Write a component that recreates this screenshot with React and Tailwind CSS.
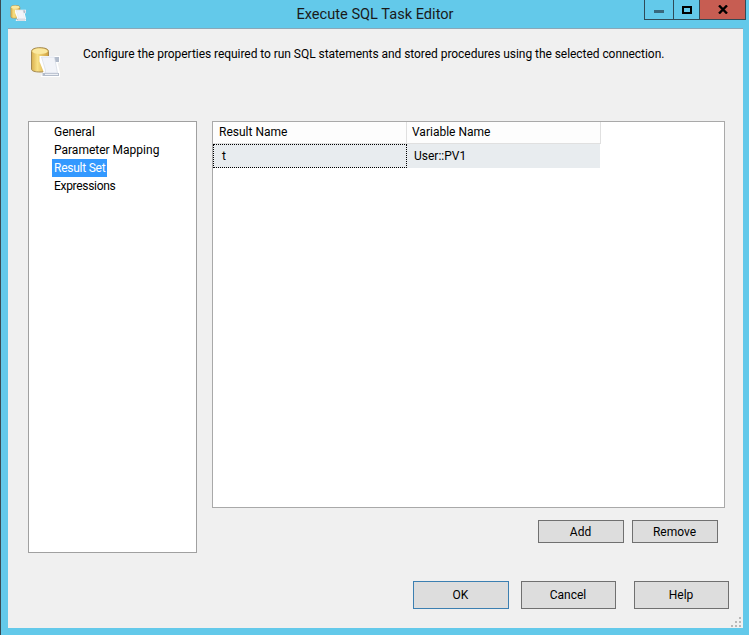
import React from 'react';

function TaskIcon({ size = 30, id = 'can' }) {
  return (
    <svg width={size} height={size} viewBox="0 0 30 30">
      <defs>
        <linearGradient id={id} x1="0" x2="1" y1="0" y2="0">
          <stop offset="0" stopColor="#d9b04f" />
          <stop offset="0.35" stopColor="#f8e084" />
          <stop offset="1" stopColor="#cf9f3e" />
        </linearGradient>
      </defs>
      <path d="M1.500 4.500C1.500 2 5 .7 10 .7S18.500 2 18.500 4.500V22c0 2-3.500 3-8.500 3s-8.500-1-8.500-3z" fill={`url(#${id})`} stroke="#a58a50" />
      <ellipse cx="10" cy="4.300" rx="7.800" ry="2.800" fill="#fbe9a0" />
      <path d="M9.500 9H30V15.500H27.500L30 25.500V30H10.500L13.500 24.500L9.500 14.500z" fill="#ffffff" />
      <path d="M23.500 10H29V15H25z" fill="#b3bccb" />
      <path d="M11.500 10H24.500L27.500 26H15L15.500 23.500L13 15z" fill="#f2f4f9" stroke="#cfd5e0" strokeWidth=".6" />
      <path d="M12.500 26H29V29H12.500z" fill="#b3bccb" />
      <path d="M15 26.800H28V28H15z" fill="#edf0f5" />
    </svg>
  );
}

function DialogButton({ label, className }) {
  return (
    <button className={`bg-[#dddddd] border text-[#000000] flex items-center justify-center pr-[1px] ${className}`}>
      {label}
    </button>
  );
}

export default function App() {
  return (
    <div
      className="w-[749px] h-[635px] bg-[#63c9ea] flex flex-col border-l border-l-[#3a4a52] overflow-hidden text-[12px] text-[#000000]"
      style={{ fontFamily: 'Roboto, "Open Sans", sans-serif' }}
    >
      {/* title bar */}
      <div className="h-[28px] shrink-0 grid grid-cols-[1fr_auto_1fr]">
        <div className="pl-[9px] pt-[5px]">
          <TaskIcon size={16} id="can-small" />
        </div>
        <div className="text-[14.6px] leading-[28px] text-[#1a1a1a] whitespace-nowrap">Execute SQL Task Editor</div>
        <div className="flex justify-end pr-[3px]">
          <div className="flex h-[20px] border border-t-0 border-[#2f4a57]">
            <div className="w-[28px] flex items-center justify-center">
              <div className="w-[10px] h-[3px] mt-[3px] bg-[#38687d]" />
            </div>
            <div className="w-[26px] border-l border-[#2f4a57] flex items-center justify-center">
              <div className="w-[10px] h-[8px] border-2 border-black" />
            </div>
            <div className="w-[46px] border-l border-[#2f4a57] bg-[#c75d52] flex items-center justify-center">
              <svg width="10" height="9" viewBox="0 0 10 9">
                <path d="M1 .5L9 8.500M9 .5L1 8.500" stroke="#000" strokeWidth="2.400" />
              </svg>
            </div>
          </div>
        </div>
      </div>

      {/* client area */}
      <div className="relative w-[735px] h-[600px] ml-[7px] bg-[#f0f0f0] border-t border-t-[#8aa7b8]">
        <div className="h-[92px] flex">
          <div className="ml-[22px] mt-[18px]">
            <TaskIcon size={30} />
          </div>
          <div className="ml-[23px] mt-[16px] leading-[18px] whitespace-nowrap tracking-[-0.05px]">
            Configure the properties required to run SQL statements and stored procedures using the selected connection.
          </div>
        </div>

        <div className="flex pl-[20px]">
          <div className="w-[169px] h-[432px] bg-white border border-[#a0a0a0] pt-[1px] pl-[23px]">
            <div className="h-[18px] leading-[18px] pl-[2px]">General</div>
            <div className="h-[18px] leading-[18px] pl-[2px]">Parameter Mapping</div>
            <div className="h-[18px] leading-[18px] pl-[2px] w-[55px] bg-[#3399ff] text-white whitespace-nowrap tracking-[-0.25px]">Result Set</div>
            <div className="h-[18px] leading-[18px] pl-[2px] tracking-[-0.3px]">Expressions</div>
          </div>

          <div className="ml-[15px] w-[513px]">
            <div className="h-[387px] bg-white border border-[#a9a9a9]">
              <div className="flex h-[22px] w-[388px] bg-[#fdfdfd] border-b border-[#e0e0e0]">
                <div className="w-[194px] pl-[6px] leading-[20px] border-r border-[#e0e0e0]">Result Name</div>
                <div className="w-[194px] pl-[5px] leading-[20px] border-r border-[#e0e0e0]">Variable Name</div>
              </div>
              <div className="flex h-[24px] w-[387px] bg-[#e8ecef]">
                <div className="w-[194px] pl-[8px] leading-[22px] border border-dotted border-black">t</div>
                <div className="w-[193px] pl-[7px] leading-[24px]">User::PV1</div>
              </div>
            </div>
            <div className="mt-[12px] flex justify-end gap-[8px] pr-[7px]">
              <DialogButton label="Add" className="w-[86px] h-[23px] border-[#707070]" />
              <DialogButton label="Remove" className="w-[86px] h-[23px] border-[#707070]" />
            </div>
          </div>
        </div>

        <div className="mt-[28px] flex justify-end pr-[14px]">
          <DialogButton label="OK" className="w-[96px] h-[28px] border-[#3c7fb1]" />
          <DialogButton label="Cancel" className="w-[95px] h-[28px] ml-[12px] border-[#707070]" />
          <DialogButton label="Help" className="w-[95px] h-[28px] ml-[18px] border-[#707070]" />
        </div>

        {/* resize grip */}
        <svg className="absolute right-[1px] bottom-[1px]" width="11" height="11" viewBox="0 0 11 11">
          <path d="M8 1h2v2H8zM4 5h2v2H4zM8 5h2v2H8zM0 9h2v2H0zM4 9h2v2H4zM8 9h2v2H8z" fill="#b8b8b8" />
        </svg>
      </div>
    </div>
  );
}
